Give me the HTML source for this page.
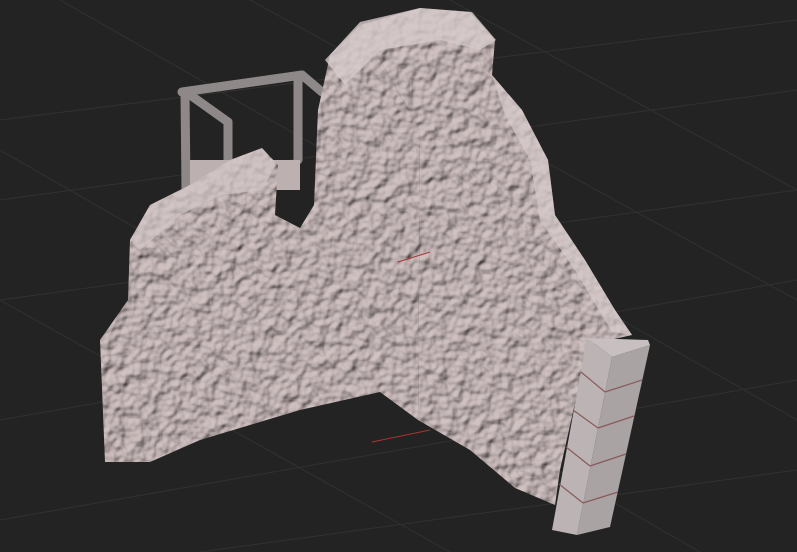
<!DOCTYPE html>
<html><head><style>
html,body{margin:0;padding:0;background:#232323;}
svg{display:block}
</style></head><body>
<svg width="797" height="552" viewBox="0 0 797 552" xmlns="http://www.w3.org/2000/svg">
<defs>
<filter id="stone" x="0" y="0" width="100%" height="100%">
<feTurbulence type="fractalNoise" baseFrequency="0.09" numOctaves="2" seed="3" result="n"/>
<feDiffuseLighting in="n" surfaceScale="4" lighting-color="#d2c2c2" result="l">
<feDistantLight azimuth="235" elevation="50"/>
</feDiffuseLighting>
<feComposite in="l" in2="SourceGraphic" operator="in"/>
</filter>
</defs>
<rect width="797" height="552" fill="#232323"/>
<g stroke="#313131" stroke-width="1" fill="none">
<line x1="0" y1="200" x2="797" y2="90"/>
<line x1="0" y1="300" x2="797" y2="190"/>
<line x1="0" y1="420" x2="797" y2="280"/>
<line x1="0" y1="520" x2="797" y2="380"/>
<line x1="200" y1="552" x2="797" y2="470"/>
<line x1="0" y1="120" x2="797" y2="20"/>
<line x1="60" y1="0" x2="797" y2="420"/>
<line x1="0" y1="150" x2="700" y2="552"/>
<line x1="0" y1="300" x2="450" y2="552"/>
<line x1="250" y1="0" x2="797" y2="300"/>
<line x1="450" y1="0" x2="797" y2="190"/>
</g>
<g stroke="#8f8888" stroke-width="9" stroke-linecap="round" fill="none">
<line x1="182" y1="92" x2="302" y2="75"/>
<line x1="302" y1="75" x2="322" y2="92"/>
<line x1="185" y1="92" x2="186" y2="190"/>
<line x1="298" y1="78" x2="298" y2="160"/>
<line x1="186" y1="92" x2="228" y2="122"/>
<line x1="228" y1="122" x2="228" y2="165"/>
</g>
<rect x="190" y="160" width="110" height="30" fill="#bdb0b0"/>
<path filter="url(#stone)" fill="#cbbcbc" d="M130,240 L150,205 L190,185 L230,160 L262,148 L278,165 L275,215 L300,228 L314,205 L318,110 L330,55 L360,25 L420,130 L418,420 L380,392 L300,410 L200,440 L150,462 L105,462 L100,340 L128,300 Z"/>
<path filter="url(#stone)" fill="#d0c2c2" d="M360,25 L420,8 L470,12 L495,40 L492,75 L522,110 L548,160 L555,215 L585,260 L615,310 L632,335 L588,345 L560,470 L555,505 L515,488 L470,450 L418,420 L420,130 Z"/>
<path fill="#d6caca" opacity="0.8" d="M325,60 L360,22 L420,8 L472,12 L496,40 L480,50 L440,40 L380,50 L345,85 Z"/>
<path fill="#d6caca" opacity="0.7" d="M492,75 L522,110 L548,160 L555,215 L585,260 L615,310 L632,335 L612,332 L575,270 L540,220 L530,160 L505,115 Z"/>
<path fill="#d2c6c6" opacity="0.7" d="M130,240 L150,205 L190,185 L230,160 L262,148 L276,165 L262,190 L220,195 L180,215 L140,250 Z"/>
<!-- pillar -->
<path fill="#c8c0c0" d="M587,338 L648,340 L650,345 L612,357 Z"/>
<path fill="#bcb4b4" d="M587,338 L612,357 L577,535 L552,530 Z"/>
<path fill="#aaa3a3" d="M612,357 L650,345 L610,527 L577,535 Z"/>
<g stroke="#8a5a5a" stroke-width="1.2">
<line x1="581" y1="372" x2="605" y2="392"/><line x1="605" y1="392" x2="642" y2="380"/>
<line x1="573" y1="410" x2="598" y2="428"/><line x1="598" y1="428" x2="634" y2="416"/>
<line x1="566" y1="447" x2="590" y2="466"/><line x1="590" y1="466" x2="626" y2="454"/>
<line x1="559" y1="484" x2="583" y2="503"/><line x1="583" y1="503" x2="618" y2="492"/>
</g>
<line x1="372" y1="442" x2="430" y2="430" stroke="#a33" stroke-width="1"/>
<line x1="398" y1="262" x2="430" y2="252" stroke="#a33" stroke-width="1"/>
</svg>
</body></html>
